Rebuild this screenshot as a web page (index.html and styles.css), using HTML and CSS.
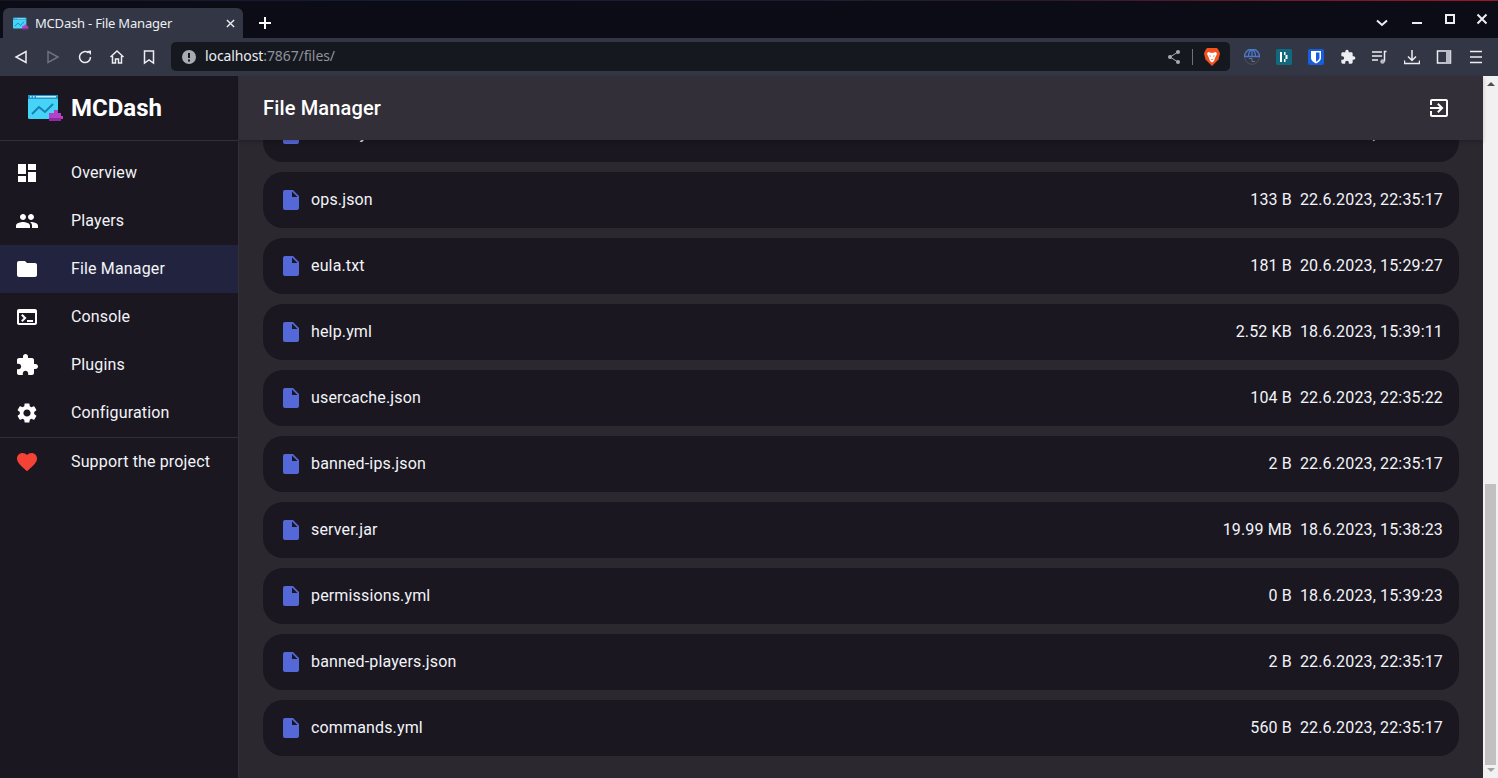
FILE: index.html
```html
<!DOCTYPE html>
<html lang="en">
<head>
    <meta charset="UTF-8">
    <meta name="viewport" content="width=device-width, initial-scale=1.0">
    <title>MCDash - File Manager</title>
    <link rel="stylesheet" href="styles.css">
</head>
<body>
    <svg class="defs" width="0" height="0">
        <symbol id="logo" viewBox="0 0 36 28">
            <rect x="0" y="1" width="30" height="24" rx="1.500" fill="#45d3f8"/>
            <rect x="0" y="1" width="30" height="4" fill="#2196cc"/>
            <rect x="2" y="2" width="1.500" height="1.500" fill="#bdefff"/>
            <rect x="5" y="2" width="1.500" height="1.500" fill="#bdefff"/>
            <rect x="8" y="2" width="20" height="1.500" fill="#bdefff"/>
            <path d="M4 20l7-7 6 5 8-8" fill="none" stroke="#1a7fb5" stroke-width="2"/>
            <path d="M21 19h5v-3h4v3h3v3h2v3h-2v2H21z" fill="#b640c6"/>
            <path d="M21 24h12v3H21z" fill="#8e2ba0"/>
        </symbol>
        <symbol id="file" viewBox="0 0 24 24">
            <path d="M6 2c-1.100 0-1.990.9-1.990 2L4 20c0 1.100.89 2 1.990 2H18c1.100 0 2-.9 2-2V8l-6-6H6zm7 7V3.500L18.500 9H13z"/>
        </symbol>
    </svg>

    <div class="browser-top">
        <div class="tab-strip">
            <div class="tab">
                <svg class="tab-logo"><use href="#logo"/></svg>
                <span class="tab-title">MCDash - File Manager</span>
                <svg class="tab-close" viewBox="0 0 10 10"><path d="M1 1l8 8M9 1l-8 8"/></svg>
            </div>
            <svg class="new-tab" viewBox="0 0 12 12"><path d="M6 0v12M0 6h12"/></svg>
            <div class="window-buttons">
                <svg class="win-icon win-chevron" viewBox="0 0 12 12"><path d="M1 3.500l5 4.500 5-4.500"/></svg>
                <svg class="win-icon win-min" viewBox="0 0 12 12"><path d="M1 10h10"/></svg>
                <svg class="win-icon" viewBox="0 0 12 12"><path d="M2 2h8v8H2z"/></svg>
                <svg class="win-icon" viewBox="0 0 12 12"><path d="M1.500 1.500l9 9M10.500 1.500l-9 9"/></svg>
            </div>
        </div>
        <div class="toolbar">
            <div class="nav-buttons">
                <svg class="tool-icon" viewBox="0 0 16 16"><path d="M13 2.500v11L3 8z"/></svg>
                <svg class="tool-icon off" viewBox="0 0 16 16"><path d="M3 2.500v11L13 8z"/></svg>
                <svg class="tool-icon" viewBox="0 0 16 16"><path d="M13.500 8A5.500 5.500 0 1 1 11.500 3.800"/><path class="solid" d="M10 2l4-.5V6z"/></svg>
                <svg class="tool-icon" viewBox="0 0 16 16"><path d="M1.500 8L8 2l6.500 6M3.500 7v7h3v-4h3v4h3V7"/></svg>
                <svg class="tool-icon" viewBox="0 0 16 16"><path d="M3.500 2h9v12L8 11l-4.500 3z"/></svg>
            </div>
            <div class="url-bar">
                <svg class="info-icon" viewBox="0 0 14 14"><circle cx="7" cy="7" r="7"/><path d="M6 3h2v5H6zM6 9.500h2v2H6z"/></svg>
                <span class="url"><span class="url-host">localhost</span>:7867/files/</span>
                <svg class="share-icon" viewBox="0 0 14 16"><path d="M11 3L3 8l8 5"/><circle cx="11" cy="3" r="2"/><circle cx="3" cy="8" r="2"/><circle cx="11" cy="13" r="2"/></svg>
                <span class="url-sep"></span>
                <svg class="brave-icon" viewBox="0 0 16 18">
                    <path d="M3 0h10l1.500 2L16 5.500l-1.500 6L8 18l-6.500-6.500L0 5.500 1.500 2z" fill="#f4511e"/>
                    <path d="M4 4l4 1 4-1 1 2-2 4-1 3-2 1.500L6 13l-1-3-2-4z" fill="#fff"/>
                    <path d="M5.500 7l1.500 1-1 1zM10.500 7L9 8l1 1zM7 11h2l-1 1.500z" fill="#f4511e"/>
                </svg>
            </div>
            <div class="extensions">
                <svg class="ext-icon" viewBox="0 0 16 16">
                    <circle cx="8" cy="8" r="7.300" fill="none" stroke="#4b5062"/>
                    <path d="M.5 7.500a7.500 7.500 0 0 1 15 0zM8 .5v7M4.500 7.500C4.500 4 6 1.500 8 .5c2 1 3.500 3.500 3.500 7" fill="none" stroke="#4a78cc" stroke-width="1.300"/>
                    <path d="M5 9.500h3v3M11 12.500H8" fill="none" stroke="#6b7080"/>
                </svg>
                <svg class="ext-icon" viewBox="0 0 16 16">
                    <rect width="16" height="16" rx="1.500" fill="#10697c"/>
                    <path d="M4 3h2v10H4zM8 3h1.500v3H8zM8 10h1.500v3H8zM9.500 6h2v4h-2z" fill="#fff"/>
                </svg>
                <svg class="ext-icon" viewBox="0 0 16 16">
                    <rect width="16" height="16" rx="2" fill="#175ddc"/>
                    <path d="M3 2h10v7c0 2.500-2.500 4.500-5 5.500C5.500 13.500 3 11.500 3 9z" fill="#fff"/>
                    <path d="M8 3.500h3.500V9c0 1.500-1.800 2.800-3.500 3.700z" fill="#175ddc"/>
                </svg>
                <svg class="ext-icon" viewBox="0 0 24 24"><path fill="#eceef2" d="M20.500 11H19V7c0-1.100-.9-2-2-2h-4V3.500C13 2.120 11.880 1 10.500 1S8 2.120 8 3.500V5H4c-1.100 0-1.990.9-1.990 2v3.800H3.500c1.490 0 2.700 1.210 2.700 2.700s-1.210 2.700-2.700 2.700H2V20c0 1.100.9 2 2 2h3.800v-1.500c0-1.490 1.210-2.700 2.700-2.700 1.490 0 2.700 1.210 2.700 2.700V22H17c1.100 0 2-.9 2-2v-4h1.500c1.380 0 2.500-1.120 2.500-2.500S21.880 11 20.500 11z"/></svg>
                <svg class="tool-icon small" viewBox="0 0 16 16"><path d="M0 3h10M0 7h10M0 11h6M14.500 2.500h-2v10"/><circle class="solid" cx="10.500" cy="12.500" r="2.200"/></svg>
                <svg class="tool-icon small" viewBox="0 0 16 16"><path d="M8 1v10M4 7.500l4 4 4-4M.5 11.500v3h15v-3"/></svg>
                <svg class="tool-icon small" viewBox="0 0 16 16"><path d="M1.500 2h13v12h-13z"/><path class="solid" d="M10 2h4.500v12H10z"/></svg>
                <svg class="tool-icon small" viewBox="0 0 16 16"><path d="M2 2.500h12M2 8h12M2 13.500h12"/></svg>
            </div>
        </div>
    </div>

    <div class="app">
        <aside class="sidebar">
            <div class="brand">
                <svg class="brand-logo"><use href="#logo"/></svg>
                <span class="brand-name">MCDash</span>
            </div>
            <nav class="nav-list">
                <a class="nav-item">
                    <svg class="nav-icon" viewBox="0 0 24 24"><path d="M3 13h8V3H3v10zm0 8h8v-6H3v6zm10 0h8V11h-8v10zm0-18v6h8V3h-8z"/></svg>
                    <span>Overview</span>
                </a>
                <a class="nav-item">
                    <svg class="nav-icon" viewBox="0 0 24 24"><path d="M16 11c1.660 0 2.990-1.340 2.990-3S17.660 5 16 5c-1.660 0-3 1.340-3 3s1.340 3 3 3zm-8 0c1.660 0 2.990-1.340 2.990-3S9.660 5 8 5C6.340 5 5 6.340 5 8s1.340 3 3 3zm0 2c-2.330 0-7 1.170-7 3.500V19h14v-2.500c0-2.330-4.670-3.500-7-3.500zm8 0c-.29 0-.62.02-.97.05 1.160.84 1.970 1.970 1.970 3.450V19h6v-2.500c0-2.330-4.670-3.500-7-3.500z"/></svg>
                    <span>Players</span>
                </a>
                <a class="nav-item active">
                    <svg class="nav-icon" viewBox="0 0 24 24"><path d="M10 4H4c-1.100 0-1.990.9-1.990 2L2 18c0 1.100.9 2 2 2h16c1.100 0 2-.9 2-2V8c0-1.100-.9-2-2-2h-8l-2-2z"/></svg>
                    <span>File Manager</span>
                </a>
                <a class="nav-item">
                    <svg class="nav-icon" viewBox="0 0 24 24"><path d="M20 4H4c-1.110 0-2 .9-2 2v12c0 1.100.89 2 2 2h16c1.100 0 2-.9 2-2V6c0-1.100-.9-2-2-2zm0 14H4V8h16v10zm-2-1h-6v-2h6v2zM7.500 17l-1.410-1.410L8.670 13l-2.590-2.590L7.500 9l4 4-4 4z"/></svg>
                    <span>Console</span>
                </a>
                <a class="nav-item">
                    <svg class="nav-icon" viewBox="0 0 24 24"><path d="M20.500 11H19V7c0-1.100-.9-2-2-2h-4V3.500C13 2.120 11.880 1 10.500 1S8 2.120 8 3.500V5H4c-1.100 0-1.990.9-1.990 2v3.800H3.500c1.490 0 2.700 1.210 2.700 2.700s-1.210 2.700-2.700 2.700H2V20c0 1.100.9 2 2 2h3.800v-1.500c0-1.490 1.210-2.700 2.700-2.700 1.490 0 2.700 1.210 2.700 2.700V22H17c1.100 0 2-.9 2-2v-4h1.500c1.380 0 2.500-1.120 2.500-2.500S21.880 11 20.500 11z"/></svg>
                    <span>Plugins</span>
                </a>
                <a class="nav-item">
                    <svg class="nav-icon" viewBox="0 0 24 24"><path d="M19.140 12.940c.04-.3.06-.61.06-.94 0-.32-.02-.64-.07-.94l2.030-1.580c.18-.14.23-.41.12-.61l-1.920-3.320c-.12-.22-.37-.29-.59-.22l-2.390.96c-.5-.38-1.030-.7-1.620-.94l-.36-2.540c-.04-.24-.24-.41-.48-.41h-3.840c-.24 0-.43.17-.47.41l-.36 2.540c-.59.24-1.130.57-1.620.94l-2.390-.96c-.22-.08-.47 0-.59.22L2.740 8.870c-.12.21-.08.47.12.61l2.030 1.580c-.05.3-.09.63-.09.94s.02.64.07.94l-2.030 1.580c-.18.14-.23.41-.12.61l1.920 3.320c.12.22.37.29.59.22l2.390-.96c.5.38 1.030.7 1.620.94l.36 2.540c.05.24.24.41.48.41h3.840c.24 0 .44-.17.47-.41l.36-2.540c.59-.24 1.130-.56 1.620-.94l2.390.96c.22.08.47 0 .59-.22l1.920-3.320c.12-.22.07-.47-.12-.61l-2.010-1.580zM12 15.600c-1.980 0-3.600-1.620-3.600-3.600s1.620-3.600 3.600-3.600 3.600 1.620 3.600 3.600-1.620 3.600-3.600 3.600z"/></svg>
                    <span>Configuration</span>
                </a>
            </nav>
            <a class="nav-item support">
                <svg class="nav-icon heart" viewBox="0 0 24 24"><path d="M12 21.350l-1.450-1.320C5.400 15.360 2 12.280 2 8.500 2 5.420 4.420 3 7.500 3c1.740 0 3.410.81 4.500 2.090C13.090 3.810 14.760 3 16.500 3 19.580 3 22 5.420 22 8.500c0 3.780-3.400 6.860-8.550 11.540L12 21.350z"/></svg>
                <span>Support the project</span>
            </a>
        </aside>

        <main class="main">
            <header class="header">
                <h1>File Manager</h1>
                <svg class="logout" viewBox="0 0 24 24"><path d="M10.090 15.590L11.500 17l5-5-5-5-1.410 1.410L12.670 11H3v2h9.670l-2.580 2.590zM19 3H5c-1.110 0-2 .9-2 2v4h2V5h14v14H5v-4H3v4c0 1.100.89 2 2 2h14c1.100 0 2-.9 2-2V5c0-1.100-.9-2-2-2z"/></svg>
            </header>
            <div class="file-list">
                <div class="file-row"><svg class="file-icon"><use href="#file"/></svg><span class="file-name">bukkit.yml</span><span class="file-size">1.2 KB</span><span class="file-date">22.6.2023, 22:35:17</span></div>
                <div class="file-row"><svg class="file-icon"><use href="#file"/></svg><span class="file-name">ops.json</span><span class="file-size">133 B</span><span class="file-date">22.6.2023, 22:35:17</span></div>
                <div class="file-row"><svg class="file-icon"><use href="#file"/></svg><span class="file-name">eula.txt</span><span class="file-size">181 B</span><span class="file-date">20.6.2023, 15:29:27</span></div>
                <div class="file-row"><svg class="file-icon"><use href="#file"/></svg><span class="file-name">help.yml</span><span class="file-size">2.52 KB</span><span class="file-date">18.6.2023, 15:39:11</span></div>
                <div class="file-row"><svg class="file-icon"><use href="#file"/></svg><span class="file-name">usercache.json</span><span class="file-size">104 B</span><span class="file-date">22.6.2023, 22:35:22</span></div>
                <div class="file-row"><svg class="file-icon"><use href="#file"/></svg><span class="file-name">banned-ips.json</span><span class="file-size">2 B</span><span class="file-date">22.6.2023, 22:35:17</span></div>
                <div class="file-row"><svg class="file-icon"><use href="#file"/></svg><span class="file-name">server.jar</span><span class="file-size">19.99 MB</span><span class="file-date">18.6.2023, 15:38:23</span></div>
                <div class="file-row"><svg class="file-icon"><use href="#file"/></svg><span class="file-name">permissions.yml</span><span class="file-size">0 B</span><span class="file-date">18.6.2023, 15:39:23</span></div>
                <div class="file-row"><svg class="file-icon"><use href="#file"/></svg><span class="file-name">banned-players.json</span><span class="file-size">2 B</span><span class="file-date">22.6.2023, 22:35:17</span></div>
                <div class="file-row"><svg class="file-icon"><use href="#file"/></svg><span class="file-name">commands.yml</span><span class="file-size">560 B</span><span class="file-date">22.6.2023, 22:35:17</span></div>
            </div>
        </main>

        <div class="scrollbar">
            <span class="arrow-up"></span>
            <span class="thumb"></span>
            <span class="arrow-down"></span>
        </div>
    </div>
</body>
</html>
```

FILE: styles.css
```css
* {
    box-sizing: border-box;
}
html, body {
    height: 100%;
}
body {
    margin: 0;
    display: flex;
    flex-direction: column;
    overflow: hidden;
    font-family: Roboto, sans-serif;
    font-size: 16px;
    color: #fff;
    background-color: #2b2830;
}
.defs {
    position: absolute;
}

/* browser chrome */
.browser-top {
    flex: none;
    font-family: "Noto Sans", sans-serif;
}
.tab-strip {
    height: 38px;
    display: flex;
    align-items: flex-end;
    padding-left: 3px;
    background-color: #0b0c15;
    background-image: linear-gradient(90deg, #141622 0%, #141c38 25%, #1c1d33 50%, #2c1a2c 70%, #6a1a2c 85%, #a01428 100%);
    background-size: 100% 1px;
    background-repeat: no-repeat;
}
.tab {
    width: 240px;
    height: 30px;
    display: flex;
    align-items: center;
    padding: 0 8px 0 10px;
    background-color: #323645;
    border-radius: 6px 6px 0 0;
}
.tab-logo {
    width: 16px;
    height: 13px;
    flex: none;
}
.tab-title {
    flex: 1;
    margin-left: 6px;
    font-size: 13px;
    letter-spacing: -0.2px;
    color: #eceef2;
    white-space: nowrap;
}
.tab-close {
    width: 9px;
    height: 9px;
    fill: none;
    stroke: #eceef2;
    stroke-width: 1.500;
}
.new-tab {
    width: 12px;
    height: 12px;
    margin: 0 0 9px 16px;
    fill: none;
    stroke: #fff;
    stroke-width: 2;
}
.window-buttons {
    margin-left: auto;
    height: 100%;
    display: flex;
    align-items: center;
    gap: 20px;
    padding-right: 10px;
}
.win-icon {
    width: 12px;
    height: 12px;
    fill: none;
    stroke: #eceef2;
    stroke-width: 2;
}
.win-chevron {
    margin: 8px 3px 0 0;
}
.win-min {
    margin-right: 1px;
}
.toolbar {
    height: 38px;
    display: flex;
    align-items: center;
    padding-bottom: 1px;
    background-color: #323645;
}
.nav-buttons {
    width: 171px;
    display: flex;
    align-items: center;
    gap: 16px;
    padding-left: 13px;
}
.tool-icon {
    width: 16px;
    height: 16px;
    flex: none;
    fill: none;
    stroke: #eceef2;
    stroke-width: 1.500;
}
.tool-icon.off {
    stroke: #6d7180;
}
.tool-icon .solid {
    fill: #eceef2;
    stroke: none;
}
.tool-icon.small .solid {
    fill: #b9bcc6;
}
.url-bar {
    width: 1059px;
    height: 29px;
    display: flex;
    align-items: center;
    padding: 0 10px 0 11px;
    background-color: #16181f;
    border-radius: 5px;
}
.info-icon {
    width: 14px;
    height: 14px;
    fill: #a8abb3;
}
.info-icon path {
    fill: #16181f;
}
.url {
    flex: 1;
    margin: 0 0 2px 9px;
    font-size: 14px;
    letter-spacing: -0.1px;
    color: #8f929b;
}
.url-host {
    color: #eceef2;
}
.share-icon {
    width: 14px;
    height: 16px;
    fill: none;
    stroke: #a8abb3;
    stroke-width: 1;
}
.share-icon circle {
    fill: #a8abb3;
    stroke: none;
}
.url-sep {
    width: 1px;
    height: 16px;
    margin: 0 11px;
    background-color: #6d7180;
}
.brave-icon {
    width: 16px;
    height: 18px;
}
.extensions {
    display: flex;
    align-items: center;
    gap: 16px;
    padding-left: 14px;
}
.ext-icon {
    width: 16px;
    height: 16px;
    flex: none;
}

/* app */
.app {
    flex: 1;
    min-height: 0;
    display: flex;
}
.sidebar {
    width: 239px;
    flex: none;
    display: flex;
    flex-direction: column;
    background-color: #1a1721;
    border-right: 1px solid #322f3a;
}
.brand {
    height: 65px;
    display: flex;
    align-items: center;
    padding-left: 28px;
    border-bottom: 1px solid #322f3a;
}
.brand-logo {
    width: 36px;
    height: 28px;
    flex: none;
}
.brand-name {
    margin-left: 7px;
    font-size: 24px;
    font-weight: 700;
}
.nav-list {
    padding-top: 8px;
    border-bottom: 1px solid #322f3a;
}
.nav-item {
    height: 48px;
    display: flex;
    align-items: center;
    padding-left: 15px;
    letter-spacing: 0.15px;
    color: #f2f4f8;
}
.nav-item span {
    margin-bottom: 2px;
}
.nav-item.active {
    background-color: #22243f;
}
.nav-icon {
    width: 24px;
    height: 24px;
    flex: none;
    margin-right: 32px;
    fill: #fff;
}
.nav-icon.heart {
    fill: #f44336;
}
.main {
    flex: 1;
    min-width: 0;
    display: flex;
    flex-direction: column;
}
.header {
    position: relative;
    z-index: 1;
    flex: none;
    height: 64px;
    display: flex;
    align-items: center;
    justify-content: space-between;
    padding: 0 32px 0 24px;
    background-color: #322f38;
    box-shadow: 0 2px 4px rgba(0, 0, 0, 0.2);
}
.header h1 {
    margin: 0;
    font-size: 20px;
    font-weight: 500;
    letter-spacing: 0.15px;
}
.logout {
    width: 24px;
    height: 24px;
    fill: #fff;
}
.file-list {
    flex: 1;
    min-height: 0;
    overflow: hidden;
    display: flex;
    flex-direction: column;
    justify-content: flex-end;
    gap: 10px;
    padding: 0 24px 22px;
}
.file-row {
    flex: none;
    height: 56px;
    display: flex;
    align-items: center;
    padding: 0 16px;
    background-color: #1a1721;
    border-radius: 20px;
    letter-spacing: 0.15px;
    color: #f2f4f8;
}
.file-row span {
    margin-bottom: 2px;
}
.file-icon {
    width: 24px;
    height: 24px;
    flex: none;
    margin-right: 8px;
    fill: #5468d8;
}
.file-name {
    flex: 1;
}
.file-size {
    margin-right: 8px;
}
.scrollbar {
    width: 15px;
    flex: none;
    display: flex;
    flex-direction: column;
    align-items: center;
    background-color: #f1f1f1;
}
.arrow-up {
    margin-top: 6px;
    border: 4px solid transparent;
    border-top: 0;
    border-bottom: 4px solid #505050;
}
.thumb {
    width: 11px;
    height: 281px;
    margin-top: 398px;
    background-color: #c1c1c1;
}
.arrow-down {
    margin-top: 3px;
    border: 4px solid transparent;
    border-bottom: 0;
    border-top: 4px solid #a3a3a3;
}
```
